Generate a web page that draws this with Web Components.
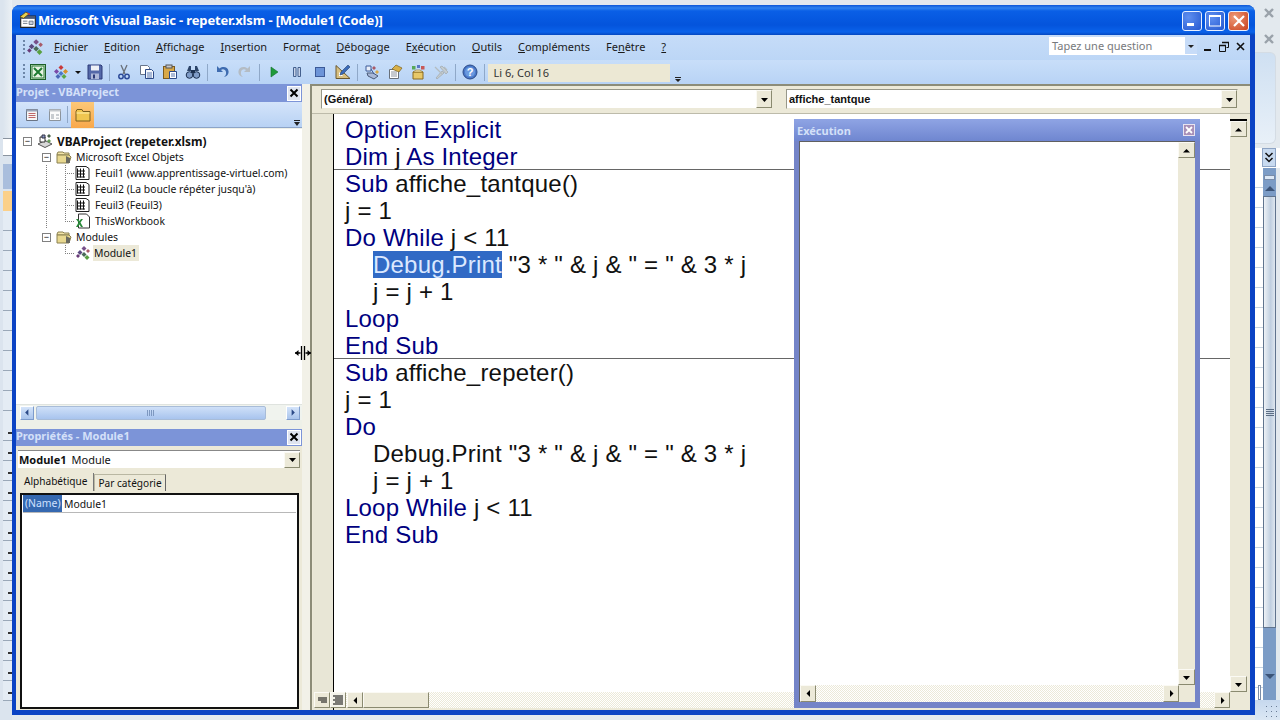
<!DOCTYPE html>
<html lang="fr">
<head>
<meta charset="utf-8">
<title>Microsoft Visual Basic</title>
<style>
  html, body { margin: 0; height: 100%; overflow: hidden; background: #e2e8ee; }
  body { font: 11px "Noto Sans", sans-serif; }
</style>
</head>
<body>
<excel-desk>
  <vb-window title="Microsoft Visual Basic - repeter.xlsm - [Module1 (Code)]">
    <vb-menubar></vb-menubar>
    <vb-toolbar></vb-toolbar>
    <vb-workspace>
      <vb-project-pane slot="left"></vb-project-pane>
      <vb-properties-pane slot="left"></vb-properties-pane>
      <vb-code-pane slot="right">
        <vb-execution slot="float"></vb-execution>
      </vb-code-pane>
    </vb-workspace>
  </vb-window>
</excel-desk>

<script>
const ICONS = {
  app: `<path d="M1.500 4.500h13v10h-13z" fill="#fff" stroke="#222"/><path d="M1.500 4.500h13v2.500h-13z" fill="#4a5a78"/><path d="M3.500 9h4M3.500 11h4M9 9h3.500v3H9z" stroke="#6a7484" fill="#c8d0dc" stroke-width=".8"/><path d="M1 5l5-4 3 1.500-5 4z" fill="#e8d050" stroke="#5a4a10" stroke-width=".7"/><path d="M7 1l3 1.500-1 1.500" fill="#c83a3a"/>`,
  excel: `<rect x=".5" y=".5" width="15" height="15" fill="#cfe8c8" stroke="#1d5f2a"/><rect x="2" y="2" width="12" height="12" fill="#e9f4e4" stroke="#2c7a3a"/><path d="M4 4l8 8M12 4l-8 8" stroke="#1d7a30" stroke-width="2"/>`,
  palette: `<path d="M8 1l2.500 2.500L8 6 5.500 3.500z" fill="#c83a3a"/><path d="M3.500 5L6 7.500 3.500 10 1 7.500z" fill="#7a4aa8"/><path d="M12.500 5L15 7.500 12.500 10 10 7.500z" fill="#d8902a"/><path d="M8 7l2.500 2.500L8 12 5.500 9.500z" fill="#4a78c8"/><path d="M11 10l2.500 2.500L11 15l-2.500-2.500z" fill="#58a848"/><path d="M5 10l2.500 2.500L5 15l-2.500-2.500z" fill="#4a68b8"/>`,
  module: `<path d="M9 1l2.500 2.500L9 6 6.500 3.500z" fill="#78508a"/><path d="M13 4l2 2-2 2-2-2z" fill="#a85a68"/><path d="M5 5l2.500 2.500L5 10 2.500 7.500z" fill="#5a4a80"/><path d="M9 7l2.500 2.500L9 12 6.500 9.500z" fill="#4a6a58"/><path d="M3 9l2 2-2 2-2-2z" fill="#683a78"/><path d="M12 10l2.500 2.500L12 15l-2.500-2.500z" fill="#58a040"/>`,
  project: `<path d="M1 11l7-3.500 7 3.500-7 3.500z" fill="#d8d8d8" stroke="#555"/><path d="M3 4h5v5H3z" fill="#fff" stroke="#333"/><path d="M5 2h3v3H5z" fill="#8a9ac8" stroke="#334"/><path d="M10 3l2-2 2 2-2 2z" fill="#486048"/><path d="M10 8l2-2 2 2-2 2z" fill="#68a058"/>`,
  save: `<path d="M1 1h13l1 1v13H1z" fill="#5468a8" stroke="#2c3a78"/><rect x="4" y="1.500" width="8" height="5" fill="#eef0f6"/><rect x="4" y="9.500" width="8" height="5.500" fill="#aeb8d8"/><rect x="6" y="10.500" width="2" height="4" fill="#2c3a78"/>`,
  cut: `<path d="M5 1l4 9M11 1L7 10" stroke="#6a7078" stroke-width="1.300" fill="none"/><circle cx="5" cy="12.500" r="2.200" fill="none" stroke="#2c4a98" stroke-width="1.500"/><circle cx="11" cy="12.500" r="2.200" fill="none" stroke="#2c4a98" stroke-width="1.500"/>`,
  copy: `<path d="M1.500 1.500h7l2 2v7h-9z" fill="#fff" stroke="#68758a"/><path d="M6.500 5.500h6l2 2v7h-8z" fill="#f4f7fc" stroke="#2c4a88"/><path d="M8 9h5M8 11h5M8 13h5" stroke="#5a78b0"/>`,
  paste: `<rect x="1.500" y="2.500" width="11" height="12" fill="#d8a848" stroke="#7a5a20"/><rect x="4" y="1" width="6" height="3" fill="#c8c8c8" stroke="#555"/><path d="M7.500 7.500h7v7h-7z" fill="#fff" stroke="#2c4a88"/><path d="M9 10h4M9 12h4" stroke="#5a78b0"/>`,
  find: `<path d="M2 7l2-5h2v5zM10 7V2h2l2 5z" fill="#2c4468"/><circle cx="4.500" cy="11" r="3.300" fill="#7f9cc8" stroke="#1c3050"/><circle cx="11.500" cy="11" r="3.300" fill="#7f9cc8" stroke="#1c3050"/><rect x="6" y="6" width="4" height="3" fill="#1c3050"/>`,
  undo: `<path d="M3 2v6h6L7 6c2-1.500 4.500-.5 5 2 .4 2-.5 4-2 5 3-.5 5-3 4.500-6C14 3.500 9.500 1.500 5.500 4.500z" fill="#3f6cb0"/>`,
  redo: `<path d="M13 2v6H7l2-2C7 4.500 4.500 5.500 4 8c-.4 2 .5 4 2 5-3-.5-5-3-4.500-6C2 3.500 6.500 1.500 10.500 4.500z" fill="#b4bcc4"/>`,
  play: `<path d="M5 3l7 5-7 5z" fill="#1f9a3a" stroke="#14702a" stroke-width=".6"/>`,
  pause: `<path d="M4.500 3.500h2.500v9H4.500zM9 3.500h2.500v9H9z" fill="#c8d4ea" stroke="#44608e"/>`,
  stop: `<rect x="3.500" y="3.500" width="9" height="9" fill="#6c94d8" stroke="#3c5a98"/>`,
  design: `<path d="M1 1.500v13h14z" fill="#d8c080" stroke="#6a5830"/><path d="M4 8v4h4z" fill="#fff"/><path d="M6 8l7-7 2 2-7 7-3 1z" fill="#3a6ab8" stroke="#23406e" stroke-width=".6"/>`,
  explorer: `<path d="M2 2h5v5H2z" fill="#e8eef8" stroke="#3c5a98"/><path d="M3 9h6l5 3-4 3-6-3z" fill="#a8b8d8" stroke="#4a5a78"/><path d="M10 2l2 2-2 2-2-2z" fill="#a85a68"/><path d="M13 6l2 2-2 2-2-2z" fill="#d8a848"/><path d="M7 5l3 5" stroke="#3c5a98"/>`,
  props: `<path d="M2.500 5.500h9v9h-9z" fill="#fff" stroke="#68707a"/><path d="M4 8h6M4 10h6M4 12h6" stroke="#8c94a0"/><path d="M5 5l4-4 6 3-3 4z" fill="#d8b048" stroke="#7a6020" stroke-width=".7"/>`,
  objects: `<path d="M3 8h10v7H3z" fill="#e8c868" stroke="#8a6a20"/><path d="M3 8l3-2h4l3 2z" fill="#f4e4a8" stroke="#8a6a20" stroke-width=".6"/><rect x="2" y="2" width="3.500" height="3.500" fill="#58a858"/><rect x="7" y="1" width="3" height="3" fill="#5878c8"/><rect x="11" y="2" width="3.500" height="3.500" fill="#c85858"/>`,
  tools: `<path d="M3 14l6-7 2 2-7 6zM7 3l2-1 6 6-2 2z" fill="#c4ccd0" stroke="#a0a8ac" stroke-width=".7"/><path d="M11 3l3 3M2 3l7 7" stroke="#b4bcc0" stroke-width="1.300"/>`,
  help: `<circle cx="8" cy="8" r="7" fill="#4a78c8" stroke="#2a4a88"/><circle cx="8" cy="8" r="5" fill="#6a9ae0"/><text x="8" y="12" text-anchor="middle" font-family="Liberation Sans" font-weight="700" font-size="11" fill="#fff">?</text>`,
  code: `<path d="M2.500 2.500h11v11h-11z" fill="#f6f6f6" stroke="#6a7484"/><path d="M2.500 2.500h11v2h-11z" fill="#9aa4b8"/><path d="M4.500 6.500h7M4.500 8.500h7M4.500 10.500h7" stroke="#c06868"/>`,
  form: `<path d="M2.500 2.500h11v11h-11z" fill="#fbfbfb" stroke="#8c949c"/><path d="M2.500 2.500h11v2h-11z" fill="#c4c8cc"/><path d="M4 7h3v5H4zM9 7h3v2H9zM9 10.500h3V12H9z" fill="#c8ccd0"/>`,
  folder: `<path d="M1 4.500l1-2h5l1 2h7v9.500H1z" fill="#f0c650" stroke="#7a5f1e"/><path d="M1.500 6h13" stroke="#fff2b0"/>`,
  treefolder: `<path d="M1 5l1-2h5l1 1h5v2H1z" fill="#f2e4a8" stroke="#8a8050"/><path d="M1 6h12l2 2-2 6H1z" fill="#e8d890" stroke="#8a8050"/><path d="M10 7l4 2v5h-4z" fill="#6a6a60"/>`,
  sheet: `<path d="M1 1.500h10l3 2v11H1z" fill="#fff" stroke="#222"/><path d="M2 3.500h8v9H2z" fill="#fff"/><path d="M2.500 3.500v9M5.500 3.500v9M8.500 3.500v9M2 6h8M2 9h8M2 12h8" stroke="#111"/>`,
  workbook: `<path d="M3.500 1h8l3 3v11h-11z" fill="#fff" stroke="#333"/><path d="M1 6l2 0 1.500 2L6 6h2L5.500 9.500 8 14H6l-1.500-2.500L3 14H1l2.500-4.500z" fill="#2a8a3a"/>`
};

class VbIcon extends HTMLElement {
  constructor() {
    super();
    this.attachShadow({ mode: "open" });
    const size = this.getAttribute("size") || 16;
    this.shadowRoot.innerHTML = `
      <style>:host { display: inline-flex; flex: none; } svg { display: block; }</style>
      <svg width="${size}" height="${size}" viewBox="0 0 16 16">${ICONS[this.getAttribute("name")] || ""}</svg>`;
  }
}

// beige classic button with a small black triangle in it
class VbArrow extends HTMLElement {
  constructor() {
    super();
    this.attachShadow({ mode: "open" });
    const paths = {
      up: "M3 8.500h7L6.500 5z", down: "M3 5h7L6.500 9z",
      left: "M8 3v7L4.500 6.500z", right: "M5 3v7l3.500-3.500z"
    };
    const blue = this.hasAttribute("blue");
    this.shadowRoot.innerHTML = `
      <style>
        :host {
          display: flex; flex: none; width: 16px; height: 16px; box-sizing: border-box;
          align-items: center; justify-content: center;
          background: ${blue ? "linear-gradient(#d4e4fa,#a9c4ec)" : "#ece9d8"};
          border: 1px solid; border-color: ${blue ? "#fff #7e9ccc #7e9ccc #fff" : "#fbfaf4 #8a8a70 #8a8a70 #fbfaf4"};
        }
        svg { display: block; }
      </style>
      <svg width="13" height="13" viewBox="0 0 13 13"><path d="${paths[this.getAttribute("dir")]}" fill="${blue ? "#2c4a88" : "#000"}"/></svg>`;
  }
}

class ExcelDesk extends HTMLElement {
  constructor() {
    super();
    this.attachShadow({ mode: "open" });
    this.shadowRoot.innerHTML = `
      <style>
        :host { display: grid; grid-template-columns: 12px 1243px 25px; width: 1280px; height: 720px; background: #e2e8ee; }
        .left { display: flex; flex-direction: column; padding-left: 3px; background: #dbe4ee; }
        .left .top { height: 138px; background: linear-gradient(90deg,#dbe4ee,#ecf1f5); }
        .left .name { height: 16px; background: #fff; border-top: 1px solid #8a94a0; border-bottom: 1px solid #8a94a0; }
        .left .head { height: 25px; margin-top: 8px; background: #a9bedd; }
        .left .sel { height: 20px; margin-top: 2px; background: #fbd08a; }
        .left .rows { height: 210px; background: repeating-linear-gradient(#e4ecf4 0 19px, #9aa8b8 19px 20px); }
        .left .rows.dash {
          height: 280px; flex: none;
          background:
            repeating-linear-gradient(transparent 0 11px, #333 11px 13px, transparent 13px 20px) 5px 0/4px 100% no-repeat,
            repeating-linear-gradient(#e4ecf4 0 19px, #9aa8b8 19px 20px);
        }
        .mid { padding-top: 5px; height: 715px; box-sizing: border-box; display: flex; }
        .right { display: flex; flex-direction: column; background: #e3e9ee; }
        .right .x { height: 26px; display: flex; justify-content: center; align-items: center; padding-left: 3px; box-sizing: border-box; }
        .right .panel { flex: none; height: 90px; margin: 0 4px 4px 0; border-radius: 0 6px 6px 0; background: linear-gradient(#cfe0f2,#e8f0f8); border: 1px solid #d4dce4; border-left: 0; }
        .right .chev { display: flex; height: 20px; background: #fff; flex: none; }
        .right .chev i { flex: 1; }
        .right .chev b {
          width: 14px; height: 19px; margin-right: 4px; box-sizing: border-box; background: #c8daf0; border: 1px solid #8ea4c4;
          display: flex; align-items: center; justify-content: center;
        }
        .right svg { display: block; }
        .right .sheet { flex: 1; display: flex; min-height: 0; }
        .right .cells { width: 8px; flex: none; background: repeating-linear-gradient(#fff 0 19px, #c8d4e0 19px 20px); position: relative; }
        .right .tick { position: absolute; left: 3px; bottom: 0; width: 3px; height: 15px; background: #fff; border: 1px solid #7a8ca8; box-sizing: border-box; }
        .right .bar { width: 13px; margin-right: 4px; background: #7c9cc6; display: flex; flex-direction: column; align-items: center; }
        .right .split { width: 11px; height: 5px; margin: 7px 0 6px; background: #dce8f6; border: 1px solid #7a8ca8; box-sizing: border-box; flex: none; }
        .right .tri-u { width: 0; border: 5px solid transparent; border-top: 0; border-bottom-color: #3c5478; margin-bottom: 5px; flex: none; }
        .right .thumb {
          width: 100%; height: 432px; box-sizing: border-box; border: 1px solid #60748e; flex: none;
          background: linear-gradient(90deg,#eef2f6,#c0cfe0 60%,#dfe7ef); display: flex; align-items: center; justify-content: center;
        }
        .right .thumb i { width: 8px; height: 7px; background: repeating-linear-gradient(#5c6e84 0 1px, transparent 1px 2px); }
        .right .tri-d { width: 0; border: 5px solid transparent; border-bottom: 0; border-top-color: #3c5478; margin-top: 46px; flex: none; }
        .right .status { height: 20px; flex: none; background: linear-gradient(#c6d8ee,#dbe7f4); }
        .right .grip {
          float: right; width: 14px; height: 14px; margin: 4px 2px 0 0;
          background: radial-gradient(circle 1px,#6a7c96 99%,transparent) 0 0/5px 5px;
        }
      </style>
      <div class="left">
        <div class="top"></div><div class="name"></div><div class="head"></div><div class="sel"></div>
        <div class="rows"></div><div class="rows dash"></div>
      </div>
      <div class="mid"><slot></slot></div>
      <div class="right">
        <div class="x"><svg width="12" height="12"><path d="M2 2l8 8M10 2l-8 8" stroke="#9aa2aa" stroke-width="2.400"/></svg></div>
        <div class="x"><svg width="12" height="12"><path d="M2 2l8 8M10 2l-8 8" stroke="#9aa2aa" stroke-width="2.400"/></svg></div>
        <div class="panel"></div>
        <div class="chev"><i></i><b><svg width="10" height="11"><path d="M1.500 1l3.500 3.500L8.500 1M1.500 6l3.500 3.500L8.500 6" fill="none" stroke="#111" stroke-width="1.500"/></svg></b></div>
        <div class="sheet">
          <div class="cells"><div class="tick"></div></div>
          <div class="bar">
            <div class="split"></div><div class="tri-u"></div>
            <div class="thumb"><i></i></div>
            <div class="tri-d"></div>
          </div>
        </div>
        <div class="status"><div class="grip"></div></div>
      </div>`;
  }
}

class VbWindow extends HTMLElement {
  constructor() {
    super();
    this.attachShadow({ mode: "open" });
    this.shadowRoot.innerHTML = `
      <style>
        :host {
          display: flex; flex-direction: column; width: 1243px; height: 710px; box-sizing: border-box;
          border: solid #0b43c4; border-width: 0 5px 5px 4px; border-radius: 8px 8px 0 0;
          background: #bfd8f6;
        }
        header {
          height: 30px; flex: none; margin: 0 -5px 0 -4px; padding: 0 6px 0 7px; display: flex; align-items: center;
          border-radius: 8px 8px 0 0;
          background: linear-gradient(#0b55d8 0,#2f83f0 3px,#0a5fe6 6px,#0454dc 20px,#0a62ea 27px,#0447c0 100%);
          color: #fff; font: 700 13px "Noto Sans", sans-serif; letter-spacing: -.15px; white-space: nowrap;
        }
        header span { margin-left: 1px; }
        .btns { margin-left: auto; display: flex; gap: 3px; margin-top: 2px; letter-spacing: 0; }
        .btn {
          width: 20px; height: 20px; box-sizing: border-box; border: 1px solid #e8f0ff; border-radius: 3px;
          background: radial-gradient(circle at 30% 30%,#5f8ff0,#2558d0); display: flex; align-items: center; justify-content: center;
        }
        .btn.close { width: 21px; background: radial-gradient(circle at 30% 30%,#ee9a78,#c8401c); }
      </style>
      <header>
        <vb-icon name="app" size="18"></vb-icon>
        <span>${this.getAttribute("title")}</span>
        <div class="btns">
          <div class="btn"><svg width="16" height="16"><rect x="3" y="10" width="7" height="3" fill="#fff"/></svg></div>
          <div class="btn"><svg width="16" height="16"><rect x="2.500" y="3" width="11" height="10" fill="none" stroke="#fff"/><rect x="2" y="2" width="12" height="2" fill="#fff"/></svg></div>
          <div class="btn close"><svg width="16" height="16"><path d="M3 3l10 10M13 3L3 13" stroke="#fff" stroke-width="2.200"/></svg></div>
        </div>
      </header>
      <slot></slot>`;
  }
}

class VbMenubar extends HTMLElement {
  constructor() {
    super();
    this.attachShadow({ mode: "open" });
    this.shadowRoot.innerHTML = `
      <style>
        :host {
          display: flex; flex: none; height: 25px; box-sizing: border-box; align-items: center; padding: 0 0 2px 7px;
          background: linear-gradient(#c6dcf8,#bcd6f6); font: 11px "Noto Sans", sans-serif; color: #1a1a1a;
        }
        .grip { width: 2px; height: 14px; margin-right: 1px; background: repeating-linear-gradient(#6d86a8 0 2px, transparent 2px 4px); }
        nav { display: flex; margin-left: 10px; letter-spacing: -.02px; }
        nav a { margin-right: 16px; white-space: nowrap; }
        .ask {
          margin-left: auto; display: flex; width: 148px; height: 18px; background: #fff; color: #77797c;
          margin: 0 1px 1px auto; align-items: center; padding: 0 0 1px 3px; box-sizing: border-box;
        }
        .ask i { margin-left: auto; width: 12px; height: 100%; background: #c7dcf8; position: relative; }
        .ask i::after { content: ""; position: absolute; left: 3px; top: 8px; border: 3px solid transparent; border-top-color: #222; border-bottom: 0; }
        .mdi { display: flex; width: 52px; padding-left: 3px; gap: 0; box-sizing: border-box; }
        .mdi svg { display: block; margin-right: 4px; }
      </style>
      <div class="grip"></div>
      <vb-icon name="module" size="18"></vb-icon>
      <nav>
        <a><u>F</u>ichier</a><a><u>E</u>dition</a><a><u>A</u>ffichage</a><a><u>I</u>nsertion</a><a>Forma<u>t</u></a><a><u>D</u>ébogage</a><a>E<u>x</u>écution</a><a><u>O</u>utils</a><a><u>C</u>ompléments</a><a>Fe<u>n</u>être</a><a><u>?</u></a>
      </nav>
      <div class="ask">Tapez une question<i></i></div>
      <div class="mdi">
        <svg width="14" height="14"><rect x="3" y="9" width="7" height="2" fill="#111"/></svg>
        <svg width="14" height="14"><path d="M5.500 2.500h6v5h-2M2.500 5.500h6v6h-6z" fill="none" stroke="#111"/><path d="M5 2.500h7M2 5.500h7" stroke="#111" stroke-width="1.500"/></svg>
        <svg width="14" height="14"><path d="M3 3l7 7M10 3l-7 7" stroke="#111" stroke-width="1.600"/></svg>
      </div>`;
  }
}

class VbToolbar extends HTMLElement {
  constructor() {
    super();
    this.attachShadow({ mode: "open" });
    const item = (n) => `<b class="c"><vb-icon name="${n}"></vb-icon></b>`;
    this.shadowRoot.innerHTML = `
      <style>
        :host {
          display: flex; flex: none; height: 24px; align-items: center; padding-left: 7px;
          background: linear-gradient(#c8def9,#b8d3f5);
        }
        .grip { width: 2px; height: 16px; margin-right: 1.500px; background: repeating-linear-gradient(#6d86a8 0 2px, transparent 2px 4px); flex: none; }
        .c { width: 23px; display: flex; justify-content: center; flex: none; }
        .sep { width: 1px; height: 17px; margin: 0 2.500px; background: #8fa8c8; flex: none; }
        .drop { flex: none; width: 11px; display: flex; justify-content: center; }
        .drop::before { content: ""; border: 3px solid transparent; border-top-color: #111; border-bottom: 0; }
        .status {
          width: 182px; height: 18px; flex: none; padding: 1px 0 0 6px; box-sizing: border-box; line-height: 18px; margin-top: 1px;
          background: #ece8d4; font: 11px "Noto Sans", sans-serif; color: #333;
        }
        .over { width: 14px; margin-left: 1px; height: 21px; display: flex; align-items: flex-end; justify-content: center; }
        .over svg { display: block; }
      </style>
      <div class="grip"></div>
      ${item("excel")}${item("palette")}<i class="drop"></i>${item("save")}<i class="sep"></i>
      ${item("cut")}${item("copy")}${item("paste")}${item("find")}<i class="sep"></i>
      ${item("undo")}${item("redo")}<i class="sep"></i>
      ${item("play")}${item("pause")}${item("stop")}${item("design")}<i class="sep"></i>
      ${item("explorer")}${item("props")}${item("objects")}${item("tools")}<i class="sep"></i>
      ${item("help")}<i class="sep"></i>
      <div class="status">Li 6, Col 16</div>
      <div class="over"><svg width="8" height="8"><path d="M1 2h6v1H1zM1 4h6L4 7z" fill="#222"/></svg></div>`;
  }
}

class VbWorkspace extends HTMLElement {
  constructor() {
    super();
    this.attachShadow({ mode: "open" });
    this.shadowRoot.innerHTML = `
      <style>
        :host { display: flex; flex: 1; min-height: 0; position: relative; background: #ece9d8; }
        .left { width: 286px; flex: none; display: flex; flex-direction: column; background: #eef0e8; }
        .split { width: 8px; flex: none; background: #f2f1e8; border-right: 3px solid #8c8c78; margin-right: -1px; }
        .right { flex: 1; min-width: 0; display: flex; }
        .cursor { position: absolute; left: 278px; top: 260px; }
      </style>
      <div class="left"><slot name="left"></slot></div>
      <div class="split"></div>
      <div class="right"><slot name="right"></slot></div>
      <svg class="cursor" width="18" height="18" viewBox="0 0 18 18">
        <path d="M7.500 2v14M10.500 2v14" stroke="#000" stroke-width="1.300"/>
        <path d="M6.500 9H1M11.500 9H17" stroke="#000" stroke-width="1.300"/>
        <path d="M1 9l3.500-3v6zM17 9l-3.500-3v6z" fill="#000"/>
      </svg>`;
  }
}

class VbPaneTitle extends HTMLElement {
  constructor() {
    super();
    this.attachShadow({ mode: "open" });
    this.shadowRoot.innerHTML = `
      <style>
        :host {
          display: flex; flex: none; align-items: center; height: 18px; padding-right: 1px;
          background: #7c94d8; color: #d4e0f8; font: 700 11px "Noto Sans", sans-serif;
        }
        span { margin-top: -3px; }
        b { margin-left: auto; width: 14px; height: 15px; box-sizing: border-box; background: #dfe4f0; border: 1px solid #fff; display: flex; align-items: center; justify-content: center; }
        svg { display: block; }
      </style>
      <span><slot></slot></span>
      <b><svg width="10" height="10"><path d="M1.500 1.500l7 7M8.500 1.500l-7 7" stroke="#000" stroke-width="2"/></svg></b>`;
  }
}

class TreeRow extends HTMLElement {
  constructor() {
    super();
    this.attachShadow({ mode: "open" });
    const cells = (this.getAttribute("cells") || "").split(" ").filter(Boolean);
    const icon = this.getAttribute("icon");
    this.shadowRoot.innerHTML = `
      <style>
        :host { display: flex; height: 16px; align-items: center; font: 10.400px "Noto Sans", sans-serif; color: #111; white-space: nowrap; }
        .k { width: 19px; height: 16px; flex: none; position: relative; }
        .v::before, .vh::before, .l::before { content: ""; position: absolute; left: 9px; top: 0; width: 1px; background: repeating-linear-gradient(#808080 0 1px, transparent 1px 2px); }
        .v::before, .vh::before { height: 16px; }
        .l::before { height: 8px; }
        .l::after, .vh::after { content: ""; position: absolute; left: 9px; top: 8px; width: 10px; height: 1px; background: repeating-linear-gradient(90deg,#808080 0 1px, transparent 1px 2px); }
        .e { display: flex; align-items: center; justify-content: center; }
        .e::before { content: "−"; width: 9px; height: 9px; box-sizing: border-box; border: 1px solid #808080; background: #fff; font: 9px/7px "Liberation Sans", sans-serif; text-align: center; color: #000; }
        vb-icon { margin-right: 3px; }
        span { padding: 0 1px; line-height: 16px; }
        :host([selected]) vb-icon { margin-right: 2px; }
        :host([selected]) span { background: #ece9d8; padding: 0 2px 0 1px; }
        :host([strong]) span { font-weight: 700; font-size: 11.800px; }
      </style>
      ${cells.map((c) => `<i class="k ${c}"></i>`).join("")}
      <vb-icon name="${icon}"></vb-icon>
      <span><slot></slot></span>`;
  }
}

class VbProjectPane extends HTMLElement {
  constructor() {
    super();
    this.attachShadow({ mode: "open" });
    this.shadowRoot.innerHTML = `
      <style>
        :host { display: flex; flex-direction: column; height: 336px; flex: none; background: #eef0e8; }
        .tools {
          height: 26px; flex: none; display: flex; align-items: center; padding-left: 4px; box-sizing: border-box; gap: 0;
          background: linear-gradient(#d4e4fa,#b8d2f4); border-bottom: 1px solid #8ca4c8;
        }
        .tools b { width: 23px; height: 26px; display: flex; align-items: center; justify-content: center; flex: none; }
        .tools .on { background: linear-gradient(#fcc878,#f8a84a); }
        .tools i { width: 1px; height: 17px; background: #8fa8c8; margin: 0 3px 0 1px; }
        .tools svg { margin-left: auto; margin-right: 1px; align-self: flex-end; }
        .tree { flex: 1; background: #fff; padding: 4px 0 0 2px; margin-top: 1px; min-height: 0; overflow: hidden; }
        .hbar { height: 15px; flex: none; display: flex; align-items: center; background: #f0f3ee; padding: 0 2px 0 4px; border-top: 1px solid #dfe3df; }
        .hbar vb-arrow { width: 14px; height: 14px; }
        .thumb {
          width: 230px; height: 14px; margin-left: 2px; box-sizing: border-box; border: 1px solid #a8bcd8; border-radius: 2px;
          background: linear-gradient(#cfe0f8,#a8c4ee); display: flex; align-items: center; justify-content: center;
        }
        .thumb u { width: 8px; height: 6px; background: repeating-linear-gradient(90deg,#7e98c0 0 1px, transparent 1px 2px); }
        .hbar vb-arrow:last-child { margin-left: auto; }
      </style>
      <vb-pane-title>Projet - VBAProject</vb-pane-title>
      <div class="tools">
        <b><vb-icon name="code"></vb-icon></b>
        <b><vb-icon name="form"></vb-icon></b>
        <i></i>
        <b class="on"><vb-icon name="folder"></vb-icon></b>
        <svg width="8" height="8"><path d="M1 1h6v1H1zM1 3h6L4 7z" fill="#222"/></svg>
      </div>
      <div class="tree">
        <tree-row cells="e" icon="project" strong>VBAProject (repeter.xlsm)</tree-row>
        <tree-row cells="k e" icon="treefolder">Microsoft Excel Objets</tree-row>
        <tree-row cells="k v vh" icon="sheet">Feuil1 (www.apprentissage-virtuel.com)</tree-row>
        <tree-row cells="k v vh" icon="sheet">Feuil2 (La boucle répéter jusqu'à)</tree-row>
        <tree-row cells="k v vh" icon="sheet">Feuil3 (Feuil3)</tree-row>
        <tree-row cells="k v l" icon="workbook">ThisWorkbook</tree-row>
        <tree-row cells="k e" icon="treefolder">Modules</tree-row>
        <tree-row cells="k k l" icon="module" selected>Module1</tree-row>
      </div>
      <div class="hbar">
        <vb-arrow dir="left" blue></vb-arrow>
        <div class="thumb"><u></u></div>
        <vb-arrow dir="right" blue></vb-arrow>
      </div>`;
  }
}

class VbPropertiesPane extends HTMLElement {
  constructor() {
    super();
    this.attachShadow({ mode: "open" });
    this.shadowRoot.innerHTML = `
      <style>
        :host { display: flex; flex-direction: column; flex: 1; min-height: 0; margin-top: 9px; background: #ece9d8; font: 10.400px "Noto Sans", sans-serif; color: #111; }
        vb-pane-title { height: 17px; padding-bottom: 1px; box-sizing: border-box; }
        .combo {
          margin: 4px 2px 0 2px; height: 17px; flex: none; display: flex; align-items: center; background: #fff; padding-left: 1px;
          border-top: 1px solid #888; font-size: 11px;
        }
        .combo b { margin-right: 5px; }
        .combo vb-arrow { margin-left: auto; }
        .tabs { display: flex; margin: 5px 0 0 4px; height: 18px; flex: none; align-items: flex-end; font-size: 10.100px; }
        .tab { height: 18px; box-sizing: border-box; padding: 0 3px 0 3px; line-height: 16px; white-space: nowrap; }
        .tab.on { padding: 0 6px 0 4px; border-right: 1px solid #777; }
        .tab.off { height: 17px; padding: 0 3px 0 3px; border: 1px solid #b9b7a2; border-right-color: #666; border-bottom: 0; background: #ece9d8; }
        .grid { flex: 1; margin: 2px 3px 1px 4px; background: #fff; border: 2px solid #111; border-color: #111; box-sizing: border-box; min-height: 0; }
        .row { display: flex; height: 17px; align-items: center; border-bottom: 1px solid #b8b8b8; margin: 0 1px; }
        .name { width: 39px; padding-left: 2px; height: 100%; line-height: 16px; box-sizing: border-box; background: #3568b0; color: #cfe0ff; }
        .val { padding-left: 2px; }
      </style>
      <vb-pane-title>Propriétés - Module1</vb-pane-title>
      <div class="combo"><b>Module1</b>Module<vb-arrow dir="down"></vb-arrow></div>
      <div class="tabs">
        <div class="tab on">Alphabétique</div>
        <div class="tab off">Par catégorie</div>
      </div>
      <div class="grid">
        <div class="row"><div class="name">(Name)</div><div class="val">Module1</div></div>
      </div>`;
  }
}

class VbCodePane extends HTMLElement {
  constructor() {
    super();
    this.attachShadow({ mode: "open" });
    this.shadowRoot.innerHTML = `
      <style>
        :host { display: flex; flex-direction: column; flex: 1; position: relative; background: #ece9d8; border-top: 2px solid #8c8c78; min-width: 0; }
        .combos { height: 28px; flex: none; display: flex; padding: 3px 0 0 9px; box-sizing: border-box; gap: 13px; border-bottom: 1px solid #bdbbaa; }
        .combo {
          width: 452px; height: 20px; box-sizing: border-box; display: flex; align-items: center; background: #fff;
          padding-left: 2px; border: 1px solid; border-color: #98988a #ece9d8 #ece9d8 #98988a;
          font: 700 11px "Liberation Sans", sans-serif; color: #111;
        }
        .combo vb-arrow { margin-left: auto; height: 18px; }
        .body { flex: 1; display: flex; min-height: 0; }
        .margin { width: 20px; flex: none; background: #e8e6d6; border-right: 1px solid #000; margin-left: 1px; }
        .main { flex: 1; display: flex; flex-direction: column; min-width: 0; background: #fff; }
        .code { flex: 1; padding: 2px 0 0 11px; font: 24px/27px "Liberation Sans", sans-serif; color: #111; white-space: pre; overflow: hidden; letter-spacing: .2px; }
        .code b { font-weight: 400; color: #000080; }
        .code .ln { height: 27px; }
        .code .sep { height: 27px; box-sizing: border-box; margin-left: -11px; padding-left: 11px; border-bottom: 1px solid #666; }
        .code .ind { padding-left: 28px; }
        .code mark { background: #316ac5; color: #dbe8ff; }
        .hbar { height: 16px; flex: none; display: flex; background: conic-gradient(#ece9d8 25%,#fff 0 50%,#ece9d8 0 75%,#fff 0) 0 0/2px 2px; box-shadow: 0 2px 0 #ece9d8; position: relative; top: -2px; }
        .hbar vb-arrow:first-child { margin-left: 13px; }
        .hbar .thumb { width: 66px; background: #ece9d8; border: 1px solid; border-color: #fbfaf4 #8a8a70 #8a8a70 #fbfaf4; box-sizing: border-box; }
        .hbar vb-arrow:last-child { margin-left: auto; }
        .views { display: flex; position: absolute; left: 2px; bottom: 2px; }
        .views b { width: 16px; height: 16px; box-sizing: border-box; background: #ece9d8; border: 1px solid; border-color: #fbfaf4 #8a8a70 #8a8a70 #fbfaf4; display: flex; align-items: center; justify-content: center; }
        .views b.on { background: #f4f3ea; }
        .vbar { width: 17px; flex: none; display: flex; flex-direction: column; background: #ece9d8; }
        .vbar .sp { height: 7px; border-bottom: 2px solid #000; box-sizing: border-box; }
        .vbar vb-arrow { width: 17px; }
        .vbar .track { flex: 1; }
        .vbar .tail { height: 18px; }
        .edge { width: 3px; flex: none; background: #ece9d8; }
        slot[name=float] { display: contents; }
      </style>
      <div class="combos">
        <div class="combo">(Général)<vb-arrow dir="down"></vb-arrow></div>
        <div class="combo">affiche_tantque<vb-arrow dir="down"></vb-arrow></div>
      </div>
      <div class="body">
        <div class="margin"></div>
        <div class="main">
          <div class="code"><div class="ln"><b>Option Explicit</b></div><div class="sep"><b>Dim</b> j <b>As Integer</b></div><div class="ln"><b>Sub</b> affiche_tantque()</div><div class="ln">j = 1</div><div class="ln"><b>Do While</b> j &lt; 11</div><div class="ln ind"><mark>Debug.Print</mark> "3 * " &amp; j &amp; " = " &amp; 3 * j</div><div class="ln ind">j = j + 1</div><div class="ln"><b>Loop</b></div><div class="sep"><b>End Sub</b></div><div class="ln"><b>Sub</b> affiche_repeter()</div><div class="ln">j = 1</div><div class="ln"><b>Do</b></div><div class="ln ind">Debug.Print "3 * " &amp; j &amp; " = " &amp; 3 * j</div><div class="ln ind">j = j + 1</div><div class="ln"><b>Loop While</b> j &lt; 11</div><div class="ln"><b>End Sub</b></div></div>
          <div class="hbar"><vb-arrow dir="left"></vb-arrow><div class="thumb"></div><vb-arrow dir="right"></vb-arrow></div>
        </div>
        <div class="vbar"><div class="sp"></div><vb-arrow dir="up"></vb-arrow><div class="track"></div><vb-arrow dir="down"></vb-arrow><div class="tail"></div></div>
        <div class="edge"></div>
      </div>
      <div class="views">
        <b><svg width="12" height="12"><path d="M2 4h9M2 6h9M5 8h6" stroke="#000"/></svg></b>
        <b class="on"><svg width="12" height="12"><path d="M1 2h10M3 4h8M1 6h10M3 8h8M1 10h10" stroke="#000"/></svg></b>
      </div>
      <slot name="float"></slot>`;
  }
}

// floating Exécution window, lies over the code
class VbExecution extends HTMLElement {
  constructor() {
    super();
    this.attachShadow({ mode: "open" });
    this.shadowRoot.innerHTML = `
      <style>
        :host {
          position: absolute; left: 482px; top: 33px; width: 406px; height: 589px; box-sizing: border-box;
          display: flex; flex-direction: column; background: #7484c8; padding: 0 5px 6px 5px;
        }
        header {
          height: 22px; flex: none; margin: 0 -5px; padding: 0 5px 0 3px; display: flex; align-items: center; box-sizing: border-box;
          background: linear-gradient(#8fa4e4,#6f86d0); color: #d4e0f8; font: 700 11px "Noto Sans", sans-serif;
        }
        header b { margin-left: auto; width: 12px; height: 12px; box-sizing: border-box; background: #a890b8; border: 1px solid #e8e4f0; display: flex; align-items: center; justify-content: center; }
        svg { display: block; }
        .in { flex: 1; display: flex; flex-direction: column; min-height: 0; background: #ece9d8; border-top: 1px solid #606060; border-left: 1px solid #606060; }
        .top { flex: 1; display: flex; min-height: 0; }
        .white { flex: 1; background: #fff; }
        .v { width: 17px; flex: none; display: flex; flex-direction: column; background: #ece9d8; }
        .v vb-arrow { width: 17px; }
        .v div { flex: 1; }
        .h { height: 17px; flex: none; display: flex; background: conic-gradient(#ece9d8 25%,#fff 0 50%,#ece9d8 0 75%,#fff 0) 0 0/2px 2px; }
        .h vb-arrow { height: 17px; }
        .h vb-arrow:nth-child(2) { margin-left: auto; }
        .corner { width: 16px; flex: none; background: #ece9d8; }
      </style>
      <header>Exécution<b><svg width="10" height="10"><path d="M2 2l6 6M8 2L2 8" stroke="#fff" stroke-width="1.800"/></svg></b></header>
      <div class="in">
        <div class="top">
          <div class="white"></div>
          <div class="v"><vb-arrow dir="up"></vb-arrow><div></div><vb-arrow dir="down"></vb-arrow></div>
        </div>
        <div class="h"><vb-arrow dir="left"></vb-arrow><vb-arrow dir="right"></vb-arrow><div class="corner"></div></div>
      </div>`;
  }
}

customElements.define("vb-icon", VbIcon);
customElements.define("vb-arrow", VbArrow);
customElements.define("vb-pane-title", VbPaneTitle);
customElements.define("tree-row", TreeRow);
customElements.define("excel-desk", ExcelDesk);
customElements.define("vb-window", VbWindow);
customElements.define("vb-menubar", VbMenubar);
customElements.define("vb-toolbar", VbToolbar);
customElements.define("vb-workspace", VbWorkspace);
customElements.define("vb-project-pane", VbProjectPane);
customElements.define("vb-properties-pane", VbPropertiesPane);
customElements.define("vb-code-pane", VbCodePane);
customElements.define("vb-execution", VbExecution);
</script>
</body>
</html>
